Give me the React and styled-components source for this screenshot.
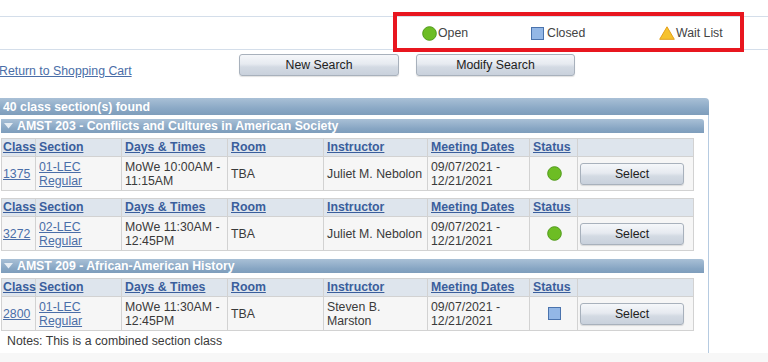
import React from 'react';
import styled, { createGlobalStyle } from 'styled-components';

const GlobalStyle = createGlobalStyle`
  html, body {
    margin: 0;
    padding: 0;
    background: #fff;
  }
  body {
    font-family: "Liberation Sans", Arial, sans-serif;
    font-size: 12.3px;
    color: #333;
    overflow: hidden;
  }
`;

const COLS = [34, 86, 106, 96, 104, 102, 48, 116];

const Page = styled.div`
  position: relative;
  width: 768px;
  height: 362px;
  display: flex;
  flex-direction: column;
  overflow: hidden;
`;

const TopSpace = styled.div`
  height: 16px;
  flex: none;
`;

const LegendBar = styled.div`
  flex: none;
  height: 32px;
  border-top: 1px solid #d4deea;
  border-bottom: 1px solid #d4deea;
  display: grid;
  grid-template-columns: 109px 128px auto;
  align-items: center;
  padding-left: 422px;
`;

const LegendItem = styled.div`
  display: flex;
  align-items: center;
  gap: ${({ $gap }) => $gap}px;
  color: #444;
`;

const Highlight = styled.div`
  position: absolute;
  left: 393px;
  top: 12px;
  width: 351px;
  height: 40px;
  box-sizing: border-box;
  border: 4px solid #e8161f;
  pointer-events: none;
`;

const ActionRow = styled.div`
  flex: none;
  height: 48px;
  display: flex;
  align-items: flex-start;
`;

const CartLink = styled.a`
  width: 240px;
  margin-left: -1px;
  margin-top: 14px;
  line-height: 14px;
  color: #4a6ea8;
  text-decoration: underline;
  cursor: pointer;
`;

const Button = styled.button`
  font-family: inherit;
  font-size: 12.3px;
  color: #222;
  width: ${({ $w }) => $w}px;
  height: 22px;
  margin-top: ${({ $top }) => $top || 0}px;
  margin-left: ${({ $left }) => $left || 0}px;
  padding: 0;
  border: 1px solid #a8b1bc;
  border-radius: 3px;
  background: linear-gradient(#f5f7fa 0%, #e6eaf0 45%, #d3dae3 60%, #c9d1dc 100%);
  box-shadow: 0 1px 1px rgba(0, 0, 0, 0.12);
  cursor: pointer;
`;

const Panel = styled.div`
  flex: none;
  width: 709px;
`;

const PanelHeader = styled.div`
  height: 17px;
  line-height: 18px;
  padding-left: 3px;
  border-top-right-radius: 4px;
  background: linear-gradient(#a9c0d6, #8ba9c6 60%, #7e9dbb);
  color: #fff;
  font-weight: bold;
`;

const PanelBody = styled.div`
  box-sizing: border-box;
  width: 709px;
  border-right: 1px solid #b6cbe1;
  padding: 4px 0 5px 1px;
`;

const CourseHeader = styled.div`
  width: 703px;
  height: 14px;
  line-height: 14px;
  margin-top: ${({ $top }) => $top}px;
  border-top-right-radius: 3px;
  background: linear-gradient(#a9c0d6, #86a5c3 70%, #7f9ebc);
  color: #fff;
  font-weight: bold;
  display: flex;
  align-items: center;
  gap: 4px;
  padding-left: 3px;
  box-sizing: border-box;
`;

const SectionGrid = styled.div`
  display: grid;
  grid-template-columns: ${COLS.map((c) => `${c}px`).join(' ')};
  width: max-content;
  margin-top: ${({ $top }) => $top}px;
  border-top: 1px solid #d2d2d2;
  border-left: 1px solid #d2d2d2;

  & > div:nth-child(8n + 1) {
    padding-left: 1px;
  }
`;

const HeadCell = styled.div`
  box-sizing: border-box;
  height: 18px;
  line-height: 17px;
  padding: 0 2px 0 3px;
  background: #dee5ed;
  border-right: 1px solid #d2d2d2;
  border-bottom: 1px solid #d2d2d2;
  font-weight: bold;
`;

const HeadLink = styled.a`
  color: #3a5e9c;
  text-decoration: underline;
  cursor: pointer;
`;

const Cell = styled.div`
  box-sizing: border-box;
  height: 34px;
  padding: 0 2px 0 3px;
  background: #f6f6f6;
  border-right: 1px solid #d2d2d2;
  border-bottom: 1px solid #d2d2d2;
  display: flex;
  align-items: center;
  justify-content: ${({ $center }) => ($center ? 'center' : 'flex-start')};
  line-height: 14px;
  color: #3a3a3a;
`;

const DataLink = styled.a`
  color: #4a6ea8;
  text-decoration: underline;
  cursor: pointer;
`;

const Notes = styled.div`
  padding: 3px 0 0 6px;
  line-height: 14px;
  color: #3a3a3a;
`;

const Footer = styled.div`
  flex: 1;
  background: #f7f7f7;
`;

const OpenIcon = ({ size = 15 }) => (
  <svg width={size} height={size} viewBox="0 0 15 15">
    <circle cx="7.5" cy="7.5" r="6.8" fill="#6dbd24" stroke="#4f9a18" strokeWidth="1" />
  </svg>
);

const ClosedIcon = ({ size = 13 }) => (
  <svg width={size} height={size} viewBox="0 0 13 13">
    <rect x="0.5" y="0.5" width="12" height="12" fill="#93b7e6" stroke="#4a73ad" strokeWidth="1" />
  </svg>
);

const WaitIcon = () => (
  <svg width="16" height="14" viewBox="0 0 16 14">
    <polygon points="8,0.8 15.3,13.3 0.7,13.3" fill="#f6c22e" stroke="#e3a01c" strokeWidth="1" strokeLinejoin="round" />
  </svg>
);

const Caret = () => (
  <svg width="9" height="6" viewBox="0 0 9 6">
    <polygon points="0,0 9,0 4.5,5.5" fill="#e6edf4" />
  </svg>
);

const HEADERS = ['Class', 'Section', 'Days & Times', 'Room', 'Instructor', 'Meeting Dates', 'Status', ''];

const SelectButton = styled(Button)`
  margin-left: -1px;
`;

const SectionTable = ({ top, row }) => (
  <SectionGrid $top={top}>
    {HEADERS.map((h, i) => (
      <HeadCell key={`h-${i}`}>{h && <HeadLink>{h}</HeadLink>}</HeadCell>
    ))}
    <Cell>
      <DataLink>{row.cls}</DataLink>
    </Cell>
    <Cell>
      <DataLink>
        {row.section}
        <br />
        Regular
      </DataLink>
    </Cell>
    <Cell>
      {row.days}
      <br />
      {row.end}
    </Cell>
    <Cell>TBA</Cell>
    <Cell>{row.instructor}</Cell>
    <Cell>
      09/07/2021 -
      <br />
      12/21/2021
    </Cell>
    <Cell $center>{row.open ? <OpenIcon /> : <ClosedIcon />}</Cell>
    <Cell>
      <SelectButton $w={104}>Select</SelectButton>
    </Cell>
  </SectionGrid>
);

export default function App() {
  return (
    <>
      <GlobalStyle />
      <Page>
        <TopSpace />
        <LegendBar>
          <LegendItem $gap={1}>
            <OpenIcon />
            Open
          </LegendItem>
          <LegendItem $gap={3}>
            <ClosedIcon />
            Closed
          </LegendItem>
          <LegendItem $gap={1}>
            <WaitIcon />
            Wait List
          </LegendItem>
        </LegendBar>
        <Highlight />
        <ActionRow>
          <CartLink>Return to Shopping Cart</CartLink>
          <Button $w={160} $top={4}>New Search</Button>
          <Button $w={159} $top={4} $left={17}>Modify Search</Button>
        </ActionRow>
        <Panel>
          <PanelHeader>40 class section(s) found</PanelHeader>
          <PanelBody>
            <CourseHeader $top={0}>
              <Caret />
              AMST 203 - Conflicts and Cultures in American Society
            </CourseHeader>
            <SectionTable
              top={5}
              row={{
                cls: '1375',
                section: '01-LEC',
                days: 'MoWe 10:00AM -',
                end: '11:15AM',
                instructor: 'Juliet M. Nebolon',
                open: true,
              }}
            />
            <SectionTable
              top={7}
              row={{
                cls: '3272',
                section: '02-LEC',
                days: 'MoWe 11:30AM -',
                end: '12:45PM',
                instructor: 'Juliet M. Nebolon',
                open: true,
              }}
            />
            <CourseHeader $top={8}>
              <Caret />
              AMST 209 - African-American History
            </CourseHeader>
            <SectionTable
              top={5}
              row={{
                cls: '2800',
                section: '01-LEC',
                days: 'MoWe 11:30AM -',
                end: '12:45PM',
                instructor: (
                  <span>
                    Steven B.
                    <br />
                    Marston
                  </span>
                ),
                open: false,
              }}
            />
            <Notes>Notes: This is a combined section class</Notes>
          </PanelBody>
        </Panel>
        <Footer />
      </Page>
    </>
  );
}
